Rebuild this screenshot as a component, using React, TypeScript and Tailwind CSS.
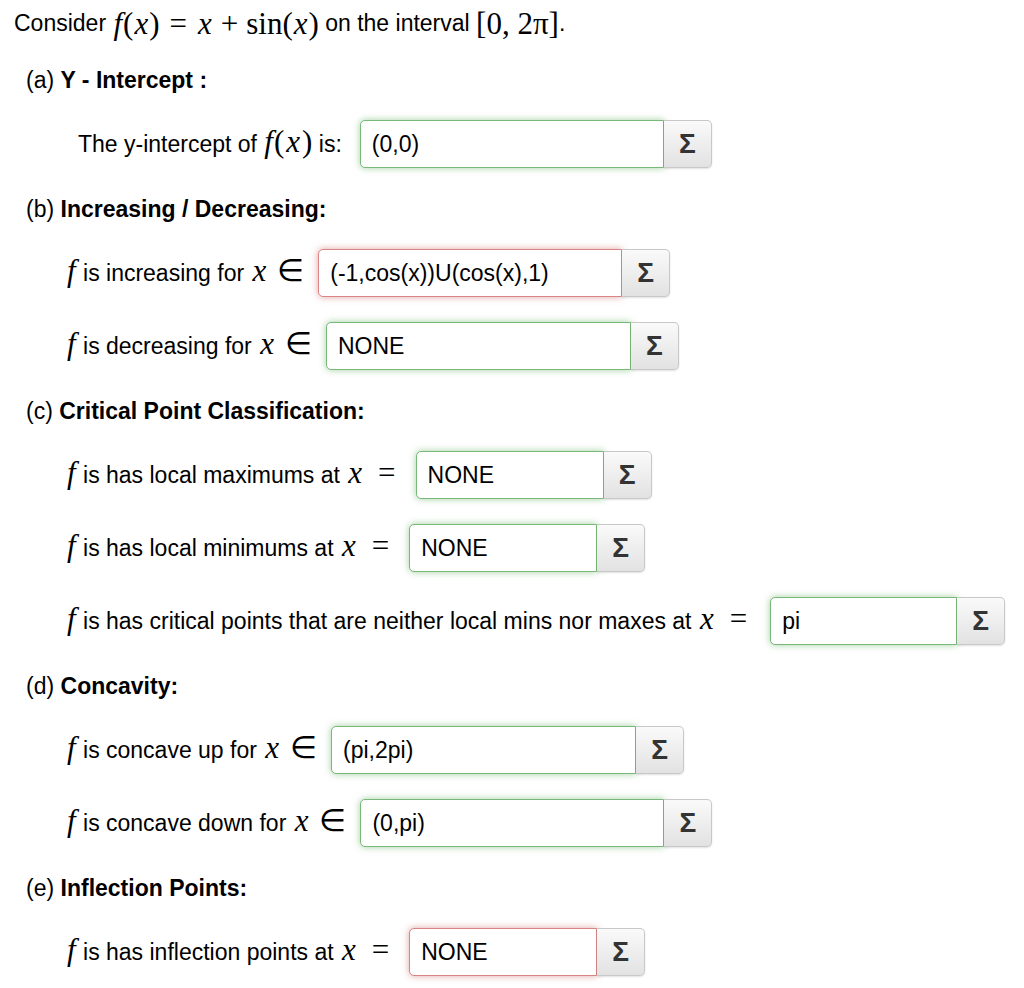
import React from 'react';

const M: React.FC<{ children: React.ReactNode; i?: boolean }> = ({ children, i }) => (
  <span className={`font-['Liberation_Serif',serif] text-[31px] leading-none ${i ? 'italic px-[1px]' : ''}`}>{children}</span>
);

const Eq = () => (
  <span className="font-['Liberation_Serif',serif] text-[31px] leading-none ml-[14px] mr-[11px]">=</span>
);

const In = () => (
  <span className="font-['Liberation_Serif',serif] text-[31px] leading-none ml-[9px] mr-[5px]">∈</span>
);

const AnswerBox: React.FC<{ value: string; width: number; ok?: boolean; ml?: string }> = ({ value, width, ok = true, ml = 'ml-[9px]' }) => (
  <div className={`flex h-[48px] ${ml}`}>
    <div
      className={`h-full flex items-center pl-[11px] bg-white rounded-l-[5px] border ${
        ok
          ? 'border-[#78b878] shadow-[0_0_7px_rgba(70,160,70,0.5)]'
          : 'border-[#d98585] shadow-[0_0_7px_rgba(200,70,70,0.5)]'
      }`}
      style={{ width }}
    >
      {value}
    </div>
    <div className="w-[48px] h-full flex items-center justify-center rounded-r-[5px] border border-l-0 border-[#c8c8c8] bg-gradient-to-b from-[#fafafa] to-[#e2e2e2] shadow-[0_1px_2px_rgba(0,0,0,0.12)] text-[#333] text-[28px] font-bold">
      Σ
    </div>
  </div>
);

const Row: React.FC<{
  label: React.ReactNode;
  value: string;
  width: number;
  ok?: boolean;
  first?: boolean;
  pl?: string;
  ml?: string;
}> = ({ label, value, width, ok, first, pl = 'pl-[66px]', ml }) => (
  <div className={`flex items-center h-[48px] ${pl} ${first ? 'mt-[16px]' : 'mt-[25px]'}`}>
    <div className="whitespace-nowrap">{label}</div>
    <AnswerBox value={value} width={width} ok={ok} ml={ml} />
  </div>
);

const Heading: React.FC<{ letter: string; title: string; mt?: string }> = ({ letter, title, mt = 'mt-[17px]' }) => (
  <div className={`flex items-center h-[48px] pl-[26px] ${mt}`}>
    <span>({letter})&nbsp;</span>
    <span className="font-bold">{title}</span>
  </div>
);

const F = () => <M i>f</M>;
const X = () => (
  <span className="font-['Liberation_Serif',serif] text-[31px] leading-none italic px-[2px]">x</span>
);

export default function App() {
  return (
    <div className="min-h-[988px] bg-white text-black font-['Liberation_Sans',Arial,sans-serif] text-[23px]">
      <div className="flex items-center h-[46px] pl-[14px] whitespace-pre">
        <span>Consider </span>
        <M i>f</M>
        <M>(</M>
        <M i>x</M>
        <M>)</M>
        <span className="font-['Liberation_Serif',serif] text-[31px] leading-none mx-[10px]">=</span>
        <M i>x</M>
        <span className="font-['Liberation_Serif',serif] text-[31px] leading-none mx-[8px]">+</span>
        <M>sin(</M>
        <M i>x</M>
        <M>)</M>
        <span> on the interval </span>
        <M>[0, 2π]</M>
        <span>.</span>
      </div>

      <Heading letter="a" title="Y - Intercept :" mt="mt-[10px]" />
      <Row
        first
        pl="pl-[78px]"
        ml="ml-[18px]"
        label={
          <>
            The y-intercept of <F />
            <M>(</M>
            <X />
            <M>)</M> is:
          </>
        }
        value="(0,0)"
        width={304}
      />

      <Heading letter="b" title="Increasing / Decreasing:" />
      <Row
        first
        label={
          <>
            <F /> is increasing for <X />
            <In />
          </>
        }
        value="(-1,cos(x))U(cos(x),1)"
        width={304}
        ok={false}
      />
      <Row
        label={
          <>
            <F /> is decreasing for <X />
            <In />
          </>
        }
        value="NONE"
        width={305}
      />

      <Heading letter="c" title="Critical Point Classification:" />
      <Row
        first
        label={
          <>
            <F /> is has local maximums at <X />
            <Eq />
          </>
        }
        value="NONE"
        width={188}
      />
      <Row
        label={
          <>
            <F /> is has local minimums at <X />
            <Eq />
          </>
        }
        value="NONE"
        width={188}
      />
      <Row
        label={
          <>
            <F /> is has critical points that are neither local mins nor maxes at <X />
            <Eq />
          </>
        }
        value="pi"
        width={187}
        ml="ml-[12px]"
      />

      <Heading letter="d" title="Concavity:" />
      <Row
        first
        label={
          <>
            <F /> is concave up for <X />
            <In />
          </>
        }
        value="(pi,2pi)"
        width={305}
      />
      <Row
        label={
          <>
            <F /> is concave down for <X />
            <In />
          </>
        }
        value="(0,pi)"
        width={304}
      />

      <Heading letter="e" title="Inflection Points:" />
      <Row
        first
        label={
          <>
            <F /> is has inflection points at <X />
            <Eq />
          </>
        }
        value="NONE"
        width={188}
        ok={false}
      />
    </div>
  );
}
